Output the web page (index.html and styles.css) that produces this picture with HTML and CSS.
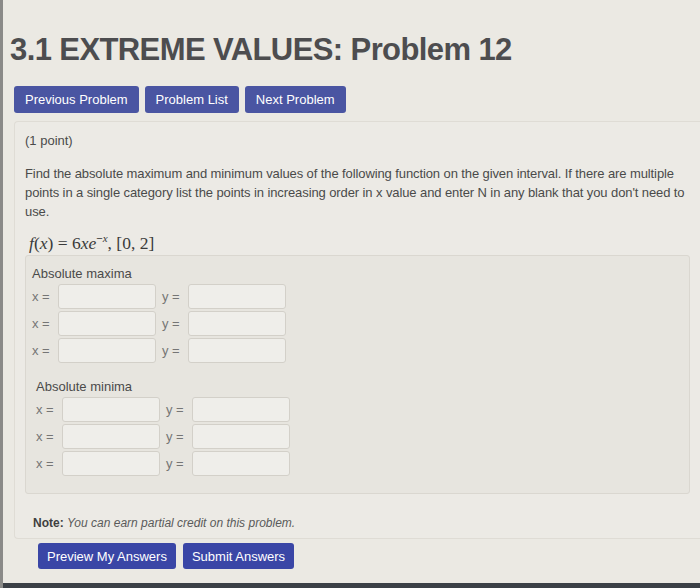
FILE: index.html
```html
<!DOCTYPE html>
<html lang="en">
<head>
    <meta charset="UTF-8">
    <meta name="viewport" content="width=device-width, initial-scale=1.0">
    <title>3.1 EXTREME VALUES: Problem 12</title>
    <link rel="stylesheet" href="styles.css">
</head>
<body>

<div class="page">
    <h1>3.1 EXTREME VALUES: Problem 12</h1>

    <div class="nav">
        <button class="btn">Previous Problem</button>
        <button class="btn">Problem List</button>
        <button class="btn">Next Problem</button>
    </div>

    <div class="problem">
        <p class="points">(1 point)</p>
        <p class="text">Find the absolute maximum and minimum values of the following function on the given interval. If there are multiple points in a single category list the points in increasing order in x value and enter N in any blank that you don't need to use.</p>
        <p class="formula"><i>f</i>(<i>x</i>) = 6<i>xe</i><sup>&minus;<i>x</i></sup>, [0, 2]</p>

        <div class="answers">
            <div class="group">
                <div class="group-title">Absolute maxima</div>
                <div class="row"><label>x =</label><input type="text"><label>y =</label><input type="text"></div>
                <div class="row"><label>x =</label><input type="text"><label>y =</label><input type="text"></div>
                <div class="row"><label>x =</label><input type="text"><label>y =</label><input type="text"></div>
            </div>
            <div class="group minima">
                <div class="group-title">Absolute minima</div>
                <div class="row"><label>x =</label><input type="text"><label>y =</label><input type="text"></div>
                <div class="row"><label>x =</label><input type="text"><label>y =</label><input type="text"></div>
                <div class="row"><label>x =</label><input type="text"><label>y =</label><input type="text"></div>
            </div>
        </div>

        <p class="note"><b>Note:</b> <i>You can earn partial credit on this problem.</i></p>
    </div>

    <div class="submit">
        <button class="btn btn-dark">Preview My Answers</button>
        <button class="btn btn-dark">Submit Answers</button>
    </div>
</div>
<div class="taskbar"></div>

</body>
</html>
```

FILE: styles.css
```css
* {
    margin: 0;
    padding: 0;
    box-sizing: border-box;
    font-family: "Liberation Sans", Arial, sans-serif;
}
body {
    width: 700px;
    height: 588px;
    overflow: hidden;
    background: #ebe9e3;
    border-left: 3px solid #8a8a88;
    color: #4a4a4a;
}
.page {
    height: 583px;
    padding: 31px 0 0 7px;
}
h1 {
    font-size: 31px;
    font-weight: bold;
    color: #4d4d4f;
    line-height: 38px;
    letter-spacing: -0.6px;
}
.nav {
    display: flex;
    gap: 6px;
    margin: 17px 0 0 4px;
}
.btn {
    background: #4a55a2;
    color: #fff;
    border: none;
    border-radius: 3px;
    height: 27px;
    padding: 0 11px;
    font-size: 13px;
    cursor: pointer;
}
.problem {
    margin: 8px 0 0 4px;
    padding: 10px 0 10px 10px;
    border: 1px solid #dfdcd5;
    border-right: none;
    border-radius: 4px 0 0 4px;
    background: #eceae5;
    height: 418px;
}
.points {
    font-size: 13px;
    line-height: 18px;
}
.text {
    margin-top: 14px;
    font-size: 13px;
    line-height: 19px;
    letter-spacing: -0.1px;
}
.formula {
    margin-top: 12px;
    padding-left: 4px;
    font-family: "Liberation Serif", "Times New Roman", serif;
    font-size: 17.5px;
    line-height: 20px;
    color: #3a3a3a;
}
.formula i {
    font-family: "Liberation Serif", "Times New Roman", serif;
}
.formula sup {
    font-size: 11px;
    vertical-align: 7px;
    line-height: 0;
}
.formula sup i {
    font-size: 11px;
}
.answers {
    margin-top: 2px;
    width: 665px;
    padding: 10px 0 16px 6px;
    background: #e7e5df;
    border: 1px solid #dad7d0;
    border-radius: 3px;
}
.group-title {
    font-size: 13px;
    line-height: 16px;
    margin-bottom: 1px;
}
.minima {
    margin-top: 15px;
    padding-left: 4px;
}
.row {
    display: flex;
    align-items: center;
    height: 27px;
}
.row label {
    width: 26px;
    font-size: 13px;
    color: #757575;
}
.row input {
    width: 98px;
    height: 25px;
    background: #efeeea;
    border: 1px solid #d3d0c9;
    border-radius: 3px;
    margin-right: 6px;
}
.note {
    margin-top: 21px;
    padding-left: 8px;
    font-size: 12px;
    line-height: 16px;
    color: #3f3f3f;
}
.note i {
    color: #5a5a5a;
}
.submit {
    display: flex;
    gap: 7px;
    margin: 4px 0 0 28px;
}
.btn-dark {
    background: #3a46a6;
    height: 26px;
    padding: 0 9px;
}
.taskbar {
    height: 5px;
    background: #3b4046;
}
```
